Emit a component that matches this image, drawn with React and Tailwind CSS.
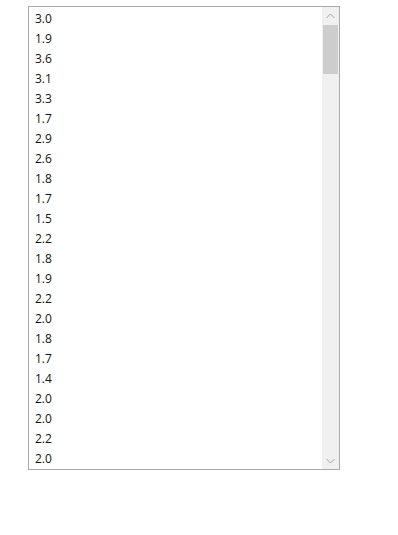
const values = [
  '3.0', '1.9', '3.6', '3.1', '3.3', '1.7', '2.9', '2.6', '1.8', '1.7', '1.5', '2.2',
  '1.8', '1.9', '2.2', '2.0', '1.8', '1.7', '1.4', '2.0', '2.0', '2.2', '2.0',
]

function Chevron({ down }) {
  return (
    <svg width="9" height="6" viewBox="0 0 9 6" className="block">
      <path
        d={down ? 'M0.5 1 L4.5 5 L8.5 1' : 'M0.5 5 L4.5 1 L8.5 5'}
        fill="none"
        stroke="#a3a3a3"
        strokeWidth="1"
      />
    </svg>
  )
}

function App() {
  return (
    <div className="h-[535px] w-[398px] bg-white pl-[28px] pt-[6px]">
      <div className="flex h-[464px] w-[312px] border border-[#a9a9a9] bg-white">
        <div className="flex-1 overflow-hidden pt-[1.5px] pl-[6px] text-[12px] text-[#111] [font-family:'Open_Sans','Noto_Sans',sans-serif]">
          {values.map((v, i) => (
            <div key={i} className="flex h-5 items-center leading-none">
              {v}
            </div>
          ))}
        </div>
        <div className="flex w-[17px] flex-col bg-[#f0f0f0]">
          <div className="flex h-[17px] items-center justify-center">
            <Chevron />
          </div>
          <div className="mx-[1px] mt-[1px] h-[49px] bg-[#cdcdcd]" />
          <div className="flex-1" />
          <div className="flex h-[17px] items-center justify-center">
            <Chevron down />
          </div>
        </div>
      </div>
    </div>
  )
}

export default App
